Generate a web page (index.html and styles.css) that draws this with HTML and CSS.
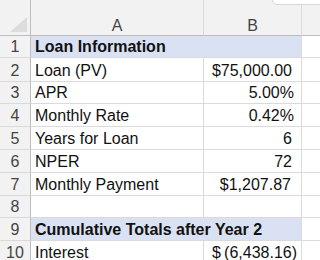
FILE: index.html
```html
<!DOCTYPE html>
<html>
<head>
<meta charset="utf-8">
<link rel="stylesheet" href="styles.css">
</head>
<body>
<div class="sheet">
  <div class="grid">
    <div class="hd corner"><svg class="tri" width="18" height="16" viewBox="0 0 18 16"><polygon points="17,0 17,15 0,15" fill="#dcdcdc"/></svg></div>
    <div class="hd col">A</div>
    <div class="hd col">B</div>
    <div class="hd col last"></div>

    <div class="rn r1">1</div>
    <div class="c span fill bold">Loan Information</div>
    <div class="c last"></div>

    <div class="rn r2">2</div>
    <div class="c">Loan (PV)</div>
    <div class="c num p9">$75,000.00</div>
    <div class="c last"></div>

    <div class="rn r3">3</div>
    <div class="c">APR</div>
    <div class="c num p7">5.00%</div>
    <div class="c last"></div>

    <div class="rn r4">4</div>
    <div class="c">Monthly Rate</div>
    <div class="c num p7">0.42%</div>
    <div class="c last"></div>

    <div class="rn r5">5</div>
    <div class="c">Years for Loan</div>
    <div class="c num p9">6</div>
    <div class="c last"></div>

    <div class="rn r6">6</div>
    <div class="c">NPER</div>
    <div class="c num p9">72</div>
    <div class="c last"></div>

    <div class="rn r7">7</div>
    <div class="c">Monthly Payment</div>
    <div class="c num p10">$1,207.87</div>
    <div class="c last"></div>

    <div class="rn r8">8</div>
    <div class="c"></div>
    <div class="c"></div>
    <div class="c last"></div>

    <div class="rn r9">9</div>
    <div class="c span fill bold">Cumulative Totals after Year 2</div>
    <div class="c last"></div>

    <div class="rn r10">10</div>
    <div class="c">Interest</div>
    <div class="c acct"><span>$</span><span>(6,438.16)</span></div>
    <div class="c last"></div>
  </div>
  <div class="tab"></div>
</div>
</body>
</html>
```
FILE: styles.css
```css
html, body {
  margin: 0;
  padding: 0;
  background: #ffffff;
}
.sheet {
  position: relative;
  width: 320px;
  height: 260px;
  overflow: hidden;
  font-family: "Liberation Sans", Arial, sans-serif;
  font-size: 16px;
  color: #111111;
}
.grid {
  display: grid;
  grid-template-columns: 31px 173px 98px 40px;
  grid-template-rows: 36px 22px 24px 22px 23px 23px 23px 23px 22px 23px 23px;
}
.grid > div {
  box-sizing: border-box;
  border-right: 1px solid #dadada;
  border-bottom: 1px solid #dadada;
  line-height: 18px;
  white-space: nowrap;
}
.hd {
  background: #f2f2f2;
  border-bottom: 1px solid #bdbdbd !important;
  color: #444444;
}
.col {
  display: flex;
  align-items: flex-end;
  justify-content: center;
  padding-bottom: 0;
}
.corner {
  position: relative;
  border-right: 1px solid #bdbdbd !important;
}
.tri {
  position: absolute;
  left: 10px;
  top: 17px;
}
.rn {
  background: #f2f2f2;
  border-right: 1px solid #bdbdbd !important;
  border-bottom: 1px solid #dadada;
  color: #444444;
  display: flex;
  align-items: flex-end;
  justify-content: center;
  padding-bottom: 1px;
}
.c {
  display: flex;
  align-items: flex-end;
  padding: 0 0 1px 4px;
}
.span {
  grid-column: 2 / span 2;
}
.fill {
  background: #d9e1f2;
}
.bold {
  font-weight: bold;
}
.num {
  justify-content: flex-end;
  padding-left: 0;
}
.p7 { padding-right: 7px; }
.p9 { padding-right: 9px; }
.p10 { padding-right: 10px; }
.acct {
  justify-content: space-between;
  padding-left: 8px;
  padding-right: 4px;
}
.last {
  border-right: none !important;
}
.tab {
  position: absolute;
  top: -6px;
  left: 272px;
  width: 60px;
  height: 9px;
  background: #ffffff;
  border: 1px solid #d6d6d6;
  border-radius: 5px;
}
```
